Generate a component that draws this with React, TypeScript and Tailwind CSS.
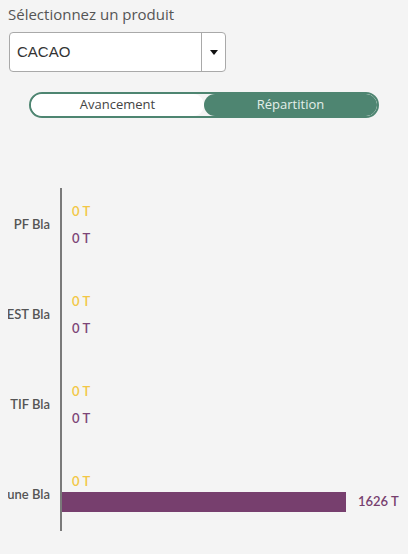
import { useState } from 'react';

type Row = { label: string; prevu: number; realise: number };

const rows: Row[] = [
  { label: 'PF Bla', prevu: 0, realise: 0 },
  { label: 'OUEST Bla', prevu: 0, realise: 0 },
  { label: 'TIF Bla', prevu: 0, realise: 0 },
  { label: 'Brune Bla', prevu: 0, realise: 1626 },
];

const MAX = 1626;
const BAR_W = 284;

export default function App() {
  const [tab, setTab] = useState<'avancement' | 'repartition'>('repartition');

  return (
    <div className="w-[408px] h-[554px] bg-[#f4f4f4] overflow-hidden font-['Open_Sans',sans-serif]">
      <div className="pl-[8px] pt-[4px]">
        <div className="text-[15px] leading-[20px] text-[#555]">Sélectionnez un produit</div>
        <div className="mt-[8px] ml-[1px] w-[217px] h-[40px] flex bg-white border border-[#a9a9a9] rounded-[4px]">
          <div className="flex-1 flex items-center pl-[7px] text-[15px] text-[#333] font-['Liberation_Sans',sans-serif]">
            CACAO
          </div>
          <div className="w-[24px] border-l border-[#a9a9a9] flex items-center justify-center">
            <svg width="8" height="5" viewBox="0 0 8 5">
              <path d="M0 0h8L4 5z" fill="#111" />
            </svg>
          </div>
        </div>
      </div>

      <div className="mt-[20px] ml-[29px] w-[350px] h-[26px] flex rounded-full border-2 border-[#4e8571] overflow-hidden text-[13px]">
        <button
          onClick={() => setTab('avancement')}
          className={
            tab === 'avancement'
              ? 'flex-1 rounded-full bg-[#4e8571] text-[#e3efe9]'
              : 'flex-1 rounded-full bg-white text-[#444]'
          }
        >
          Avancement
        </button>
        <button
          onClick={() => setTab('repartition')}
          className={
            tab === 'repartition'
              ? 'flex-1 rounded-full bg-[#4e8571] text-[#e3efe9]'
              : 'flex-1 rounded-full bg-white text-[#444]'
          }
        >
          Répartition
        </button>
      </div>

      {/* chart */}
      <div className="mt-[70px] flex h-[343px] font-['Lato',sans-serif] font-semibold text-[13px]">
        <div className="w-[60px] pl-[8px] pt-[16px]">
          {rows.map((r) => (
            <div key={r.label} className="h-[90px]">
              <div className="h-[41px] flex items-center justify-end overflow-hidden whitespace-nowrap pr-[10px] text-[#555]">
                {r.label}
              </div>
            </div>
          ))}
        </div>
        <div className="w-[2px] bg-[#7a7a7a]" />
        <div className="flex-1 pt-[16px]">
          {rows.map((r) => (
            <div key={r.label} className="h-[90px] flex flex-col">
              <div className="h-[14px] leading-[14px] pl-[10px] text-[#f2c744]">{r.prevu} T</div>
              {r.realise > 0 ? (
                <div className="mt-[4px] flex items-center">
                  <div
                    className="h-[20px] bg-[#773f6e]"
                    style={{ width: (r.realise / MAX) * BAR_W }}
                  />
                  <span className="ml-[12px] text-[#773f6e]">{r.realise} T</span>
                </div>
              ) : (
                <div className="mt-[13px] h-[14px] leading-[14px] pl-[10px] text-[#7d4577]">{r.realise} T</div>
              )}
            </div>
          ))}
        </div>
      </div>
    </div>
  );
}
